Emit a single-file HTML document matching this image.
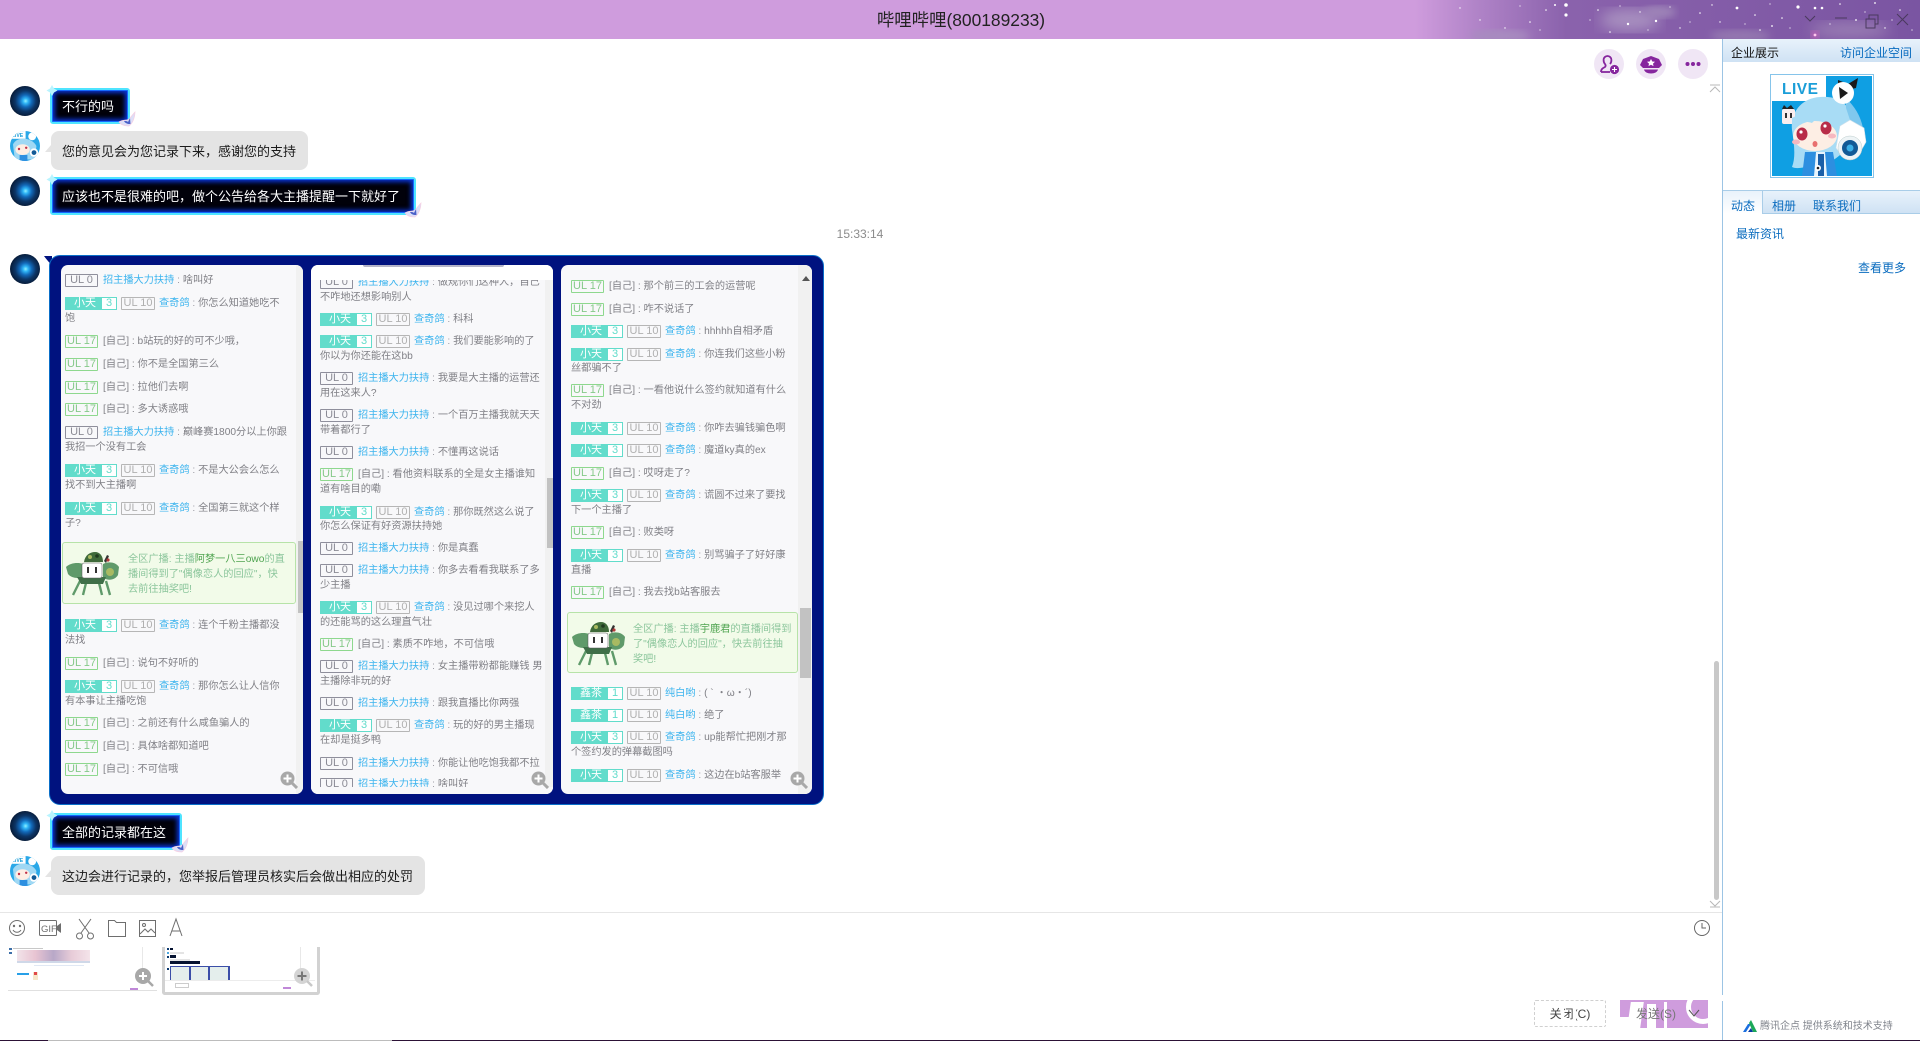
<!DOCTYPE html>
<html lang="zh">
<head>
<meta charset="utf-8">
<title>哔哩哔哩(800189233)</title>
<style>
html,body{margin:0;padding:0;background:#fff;width:1920px;height:1041px;overflow:hidden}
body{position:relative;font-family:"Liberation Sans","Noto Sans CJK SC",sans-serif;color:#222}
.a{position:absolute}
.t{position:absolute;white-space:nowrap;line-height:18px;height:18px;font-size:13px}
.lk{color:#0a6cbf;font-size:12px}
#title{left:0;top:0;width:1920px;height:39px;background:#cf9cdd;overflow:hidden}
.av{position:absolute;left:10px;width:30px;height:30px;border-radius:50%;overflow:hidden}
.av1{background:radial-gradient(circle at 52% 50%,#8ef0ff 0,#2fb4f6 12%,#1268b8 28%,#0c3566 48%,#071a36 72%,#040a18 100%)}
.bk{position:absolute;background:#01010a;border:2px solid #4fe4ff;border-radius:3px;box-sizing:border-box;box-shadow:inset 0 0 0 1px #1468ff,inset 0 0 5px 3px #0a36d8;color:#fff;font-size:13px;line-height:18px;white-space:nowrap}
.bk span{position:absolute;left:10px;top:50%;margin-top:-8px}
.gy{position:absolute;background:#e4e4e4;border-radius:8px;color:#1a1a1a;font-size:13px;line-height:18px;white-space:nowrap}
.gy span{position:absolute;left:11px;top:50%;margin-top:-8px}
.gy:before{content:"";position:absolute;left:-6px;top:14px;border-top:0 solid transparent;border-bottom:7px solid transparent;border-right:6px solid #e4e4e4;transform:scaleY(-1)}
#blue{left:49px;top:255px;width:775px;height:550px;box-sizing:border-box;background:#00127f;border:1px solid #0a6fc8;border-radius:11px}
.p{position:absolute;top:265px;height:529px;background:#f8f8fa;border-radius:7px;overflow:hidden;filter:blur(.3px)}
.sb{position:absolute;top:0;bottom:0;background:#f1f1f1}
.th{position:absolute;background:#c2c2c2}
.r{position:absolute;white-space:nowrap;height:16px;line-height:16px;font-size:10.2px;color:#808086;margin:1px 0 0}
.r u,.r s{display:inline-block;box-sizing:border-box;height:13px;line-height:11px;margin-top:1px;text-decoration:none;vertical-align:top;text-align:center;font-size:11px;margin-right:5px}
.r u{width:33px;border:1px solid #8f8f9c;border-radius:1px;color:#8b8b95}
.r u.g{border-color:#8ed88e;color:#86c98a}
.r u.x{width:34px;border-color:#b6b6b6;color:#b0b0b0;margin-right:4px}
.r s{width:52px;border:1px solid #62dccb;background:#62dccb;color:#fff;text-align:left;padding-left:8px;position:relative;margin-right:4px}
.r s em{position:absolute;right:0;top:0;width:14px;height:11px;background:#fff;color:#62dccb;font-style:normal;text-align:center}
.r b{font-weight:400;color:#3cb4ee}
.r i{font-style:normal;color:#9a9aa2}
.bn{position:absolute;box-sizing:border-box;background:#f2fbe9;border:1px solid #b7e3a8;border-radius:3px}
.bn p{position:absolute;left:65px;top:9px;margin:0;font-size:10.2px;line-height:15px;color:#8cc69c;white-space:nowrap}
.bn p b{font-weight:400;color:#4fa450}
.zm{position:absolute;width:18px;height:18px}
.ic{position:absolute;width:30px;height:30px;border-radius:50%;background:#f0e6f5;top:49px}
</style>
</head>
<body>

<div class="a" id="title">
<svg class="a" style="left:0;top:0" width="1920" height="39">
<defs>
<linearGradient id="fd" x1="0" x2="1" y1="0" y2="0">
<stop offset="0" stop-color="#cf9cdd"/><stop offset=".12" stop-color="#b184c8"/><stop offset=".3" stop-color="#8a62ac"/><stop offset="1" stop-color="#7a55a2"/>
</linearGradient>
<filter id="bl"><feGaussianBlur stdDeviation="7"/></filter>
<filter id="bl2"><feGaussianBlur stdDeviation="4"/></filter>
</defs>
<rect x="1415" y="0" width="505" height="39" fill="url(#fd)"/>
<ellipse cx="1630" cy="20" rx="30" ry="11" fill="#a890c0" filter="url(#bl)"/>
<ellipse cx="1660" cy="12" rx="16" ry="6" fill="#9e84b8" filter="url(#bl2)"/>
<ellipse cx="1850" cy="30" rx="40" ry="8" fill="#9a7eb4" filter="url(#bl)"/>
<ellipse cx="1500" cy="36" rx="30" ry="6" fill="#a88cc0" filter="url(#bl2)"/>
<ellipse cx="1740" cy="36" rx="30" ry="6" fill="#9478b0" filter="url(#bl2)"/>
<g fill="#fff">
<circle cx="1566" cy="15" r="1.600"/><circle cx="1566" cy="5" r="1.800"/><circle cx="1555" cy="5" r="1"/><circle cx="1546" cy="10" r=".8"/>
<circle cx="1656" cy="21" r="1.200"/><circle cx="1628" cy="24" r="1.200"/><circle cx="1598" cy="10" r=".8"/><circle cx="1610" cy="32" r=".8"/>
<circle cx="1737" cy="8" r="1.400"/><circle cx="1798" cy="7" r="1.600"/><circle cx="1815" cy="8" r="1.300"/><circle cx="1822" cy="8" r="1.300"/>
<circle cx="1755" cy="15" r=".8"/><circle cx="1700" cy="13" r=".8"/><circle cx="1782" cy="18" r=".8"/><circle cx="1760" cy="30" r=".8"/>
<circle cx="1856" cy="20" r=".9"/><circle cx="1875" cy="3" r=".9"/><circle cx="1900" cy="10" r=".8"/><circle cx="1480" cy="20" r=".7"/>
<circle cx="1460" cy="8" r=".7"/><circle cx="1505" cy="28" r=".7"/><circle cx="1530" cy="22" r=".8"/><circle cx="1680" cy="28" r=".7"/>
<circle cx="1720" cy="22" r=".7"/><circle cx="1840" cy="4" r=".8"/><circle cx="1885" cy="28" r=".7"/><circle cx="1772" cy="26" r=".9"/>
<circle cx="1590" cy="20" r=".6"/><circle cx="1620" cy="6" r=".6"/><circle cx="1640" cy="12" r=".7"/><circle cx="1648" cy="30" r=".6"/><circle cx="1670" cy="7" r=".6"/><circle cx="1690" cy="22" r=".6"/><circle cx="1712" cy="5" r=".7"/><circle cx="1745" cy="24" r=".6"/><circle cx="1770" cy="4" r=".6"/><circle cx="1790" cy="28" r=".6"/><circle cx="1830" cy="24" r=".6"/><circle cx="1865" cy="12" r=".6"/><circle cx="1892" cy="20" r=".6"/><circle cx="1912" cy="30" r=".6"/><circle cx="1520" cy="6" r=".6"/><circle cx="1540" cy="30" r=".6"/>
</g>
<circle cx="1815" cy="35" r="4" fill="#e060c0" filter="url(#bl2)"/><circle cx="1815" cy="35" r="1.400" fill="#ffc8ee"/>
<g fill="none" stroke="#4a3a5e" stroke-width="1">
<path d="M1805 16l5 5 5-5"/><path d="M1835 18h12"/><rect x="1866" y="19" width="9" height="9"/><path d="M1869 19v-4h9v9h-3"/><path d="M1897 14l11 11M1908 14l-11 11"/>
</g>
</svg>
<div class="t" style="left:875px;top:11px;font-size:17.400px;color:#222;width:172px;text-align:center">哔哩哔哩(800189233)</div>
</div>

<!-- action icons -->
<div class="ic" style="left:1594px">
<svg width="30" height="30" fill="none" stroke="#86269e" stroke-width="1.800"><path d="M7 23c0-3 2-4 4-5 1-1 .8-2 0-3-1-1-1.400-2-1.400-4 0-2.500 1.900-4 3.900-4s3.900 1.500 3.900 4c0 2-.4 3-1.400 4"/><path d="M7 23h9"/><circle cx="20.500" cy="20.500" r="4.600" fill="#86269e" stroke="none"/><path d="M20.500 18v5M18 20.500h5" stroke="#fff" stroke-width="1.100"/></svg>
</div>
<div class="ic" style="left:1636px">
<svg width="30" height="30"><path d="M15 7l8 3 3 6-3 3H7l-3-3 3-6z" fill="#86269e"/><path d="M15 10l1.300 2.500 2.700.3-2 1.800.5 2.500-2.500-1.300-2.500 1.300.5-2.500-2-1.800 2.700-.3z" fill="#fff"/><path d="M8 20.500h14c-.5 2.500-3.500 4-7 4s-6.500-1.500-7-4z" fill="#86269e"/></svg>
</div>
<div class="ic" style="left:1678px">
<svg width="30" height="30" fill="#86269e"><circle cx="9.500" cy="15" r="2"/><circle cx="15" cy="15" r="2"/><circle cx="20.500" cy="15" r="2"/></svg>
</div>

<!-- chat scrollbar -->
<svg class="a" style="left:1709px;top:84px" width="12" height="10" fill="none" stroke="#b8b8b8"><path d="M1 1h10M1 8l5-5 5 5"/></svg>
<div class="a" style="left:1714px;top:661px;width:5px;height:239px;background:#c8c8c8;border-radius:3px"></div>
<svg class="a" style="left:1709px;top:900px" width="12" height="9" fill="none" stroke="#b8b8b8"><path d="M1 7h10M1 1l5 5 5-5"/></svg>

<!-- avatar 1 -->
<div class="av av1" style="top:86px"></div>
<div class="bk" style="left:50px;top:88px;width:80px;height:36px"><span>不行的吗</span></div>

<div class="av" style="top:131px">
<svg width="30" height="30" viewBox="0 0 100 100"><rect width="100" height="100" fill="#2aa8e8"/><rect x="0" y="0" width="52" height="26" fill="#fff"/><text x="6" y="20" font-family="Liberation Sans" font-weight="700" font-size="17" fill="#1b9ed8">LIVE</text><circle cx="74" cy="18" r="13" fill="#fff"/><path d="M10 45C20 18 72 18 88 50L84 95H16z" fill="#9fd8f4"/><ellipse cx="42" cy="62" rx="24" ry="18" fill="#fdeee4"/><circle cx="30" cy="60" r="4" fill="#c03048"/><circle cx="54" cy="56" r="4" fill="#c03048"/><circle cx="80" cy="72" r="14" fill="#fff"/><circle cx="80" cy="72" r="8" fill="#125a96"/><rect x="32" y="80" width="26" height="20" fill="#2d8fe0"/></svg>
</div>
<div class="gy" style="left:51px;top:131px;width:257px;height:39px"><span>您的意见会为您记录下来，感谢您的支持</span></div>

<div class="av av1" style="top:176px"></div>
<div class="bk" style="left:50px;top:177px;width:366px;height:38px"><span>应该也不是很难的吧，做个公告给各大主播提醒一下就好了</span></div>

<div class="t" style="left:820px;top:225px;width:80px;text-align:center;font-size:12px;color:#8c8c8c">15:33:14</div>

<div class="av av1" style="top:254px"></div>
<svg class="a" style="left:44px;top:256px" width="8" height="10"><path d="M0 0h8v10C5 6 2 3 0 0z" fill="#00127f"/></svg>
<div class="a" id="blue"></div>

<!-- Panel 1 -->
<div class="p" style="left:61px;width:242px">
<div class="sb" style="left:235px;width:7px"></div>
<div class="th" style="left:237px;top:276px;width:5px;height:72px"></div>
<p class="r" style="left:4px;top:7px"><u>UL 0</u><b>招主播大力扶持 <i>:</i></b> 啥叫好</p>
<p class="r" style="left:4px;top:30px"><s>小天<em>3</em></s><u class="x">UL 10</u><b>查奇鸽 <i>:</i></b> 你怎么知道她吃不</p>
<p class="r" style="left:4px;top:45px">饱</p>
<p class="r" style="left:4px;top:68px"><u class="g">UL 17</u>[自己] : b站玩的好的可不少哦，</p>
<p class="r" style="left:4px;top:91px"><u class="g">UL 17</u>[自己] : 你不是全国第三么</p>
<p class="r" style="left:4px;top:114px"><u class="g">UL 17</u>[自己] : 拉他们去啊</p>
<p class="r" style="left:4px;top:136px"><u class="g">UL 17</u>[自己] : 多大诱惑哦</p>
<p class="r" style="left:4px;top:159px"><u>UL 0</u><b>招主播大力扶持 <i>:</i></b> 巅峰赛1800分以上你跟</p>
<p class="r" style="left:4px;top:174px">我招一个没有工会</p>
<p class="r" style="left:4px;top:197px"><s>小天<em>3</em></s><u class="x">UL 10</u><b>查奇鸽 <i>:</i></b> 不是大公会么怎么</p>
<p class="r" style="left:4px;top:212px">找不到大主播啊</p>
<p class="r" style="left:4px;top:235px"><s>小天<em>3</em></s><u class="x">UL 10</u><b>查奇鸽 <i>:</i></b> 全国第三就这个样</p>
<p class="r" style="left:4px;top:250px">子?</p>
<div class="bn" style="left:1px;top:277px;width:234px;height:62px">
<svg class="a" style="left:3px;top:9px" width="54" height="45" viewBox="0 0 54 45"><g fill="none" stroke="#5f9a6a" stroke-width="2.400"><path d="M14 29L7 43M20 31l-3 12M33 31l3 12M40 29l4 14"/></g><path d="M0 15c4-4 12-5 17-3v13c-5 2-12 1-15-3z" fill="#5f9a6a"/><path d="M53 15c-3-5-11-6-16-3v14c6 3 12 2 15-3z" fill="#5f9a6a"/><circle cx="44" cy="20" r="4" fill="#c8c860" opacity=".7"/><path d="M11 25h29l-3 7H15z" fill="#3f6f48"/><path d="M18 10c1-7 6-10 11-10s8 4 8 10z" fill="#3f6a3a"/><circle cx="24" cy="5" r="2" fill="#a8b860"/><circle cx="31" cy="4" r="1.800" fill="#1f3a1f"/><path d="M38 9l3-6 2 1-3 7z" fill="#333"/><circle cx="42" cy="8" r="1.600" fill="#b03838"/><rect x="16" y="11" width="20" height="15" rx="2" fill="#fff" stroke="#555" stroke-width=".5"/><rect x="21" y="15" width="2" height="6" fill="#333"/><rect x="29" y="15" width="2" height="6" fill="#333"/></svg>
<p>全区广播: 主播<b>阿梦一八三owo</b>的直<br>播间得到了"偶像恋人的回应"，快<br>去前往抽奖吧!</p>
</div>
<p class="r" style="left:4px;top:352px"><s>小天<em>3</em></s><u class="x">UL 10</u><b>查奇鸽 <i>:</i></b> 连个千粉主播都没</p>
<p class="r" style="left:4px;top:367px">法找</p>
<p class="r" style="left:4px;top:390px"><u class="g">UL 17</u>[自己] : 说句不好听的</p>
<p class="r" style="left:4px;top:413px"><s>小天<em>3</em></s><u class="x">UL 10</u><b>查奇鸽 <i>:</i></b> 那你怎么让人信你</p>
<p class="r" style="left:4px;top:428px">有本事让主播吃饱</p>
<p class="r" style="left:4px;top:450px"><u class="g">UL 17</u>[自己] : 之前还有什么咸鱼骗人的</p>
<p class="r" style="left:4px;top:473px"><u class="g">UL 17</u>[自己] : 具体啥都知道吧</p>
<p class="r" style="left:4px;top:496px"><u class="g">UL 17</u>[自己] : 不可信哦</p>
<svg class="zm" style="left:219px;top:506px"><circle cx="7.500" cy="7.500" r="7" fill="#a8a8a8"/><path d="M7.500 3.500v8M3.500 7.500h8" stroke="#fff" stroke-width="2"/><path d="M12 12l5 5" stroke="#a8a8a8" stroke-width="3"/></svg>
</div>

<!-- Panel 2 -->
<div class="p" style="left:311px;width:242px">
<div class="sb" style="left:234px;width:8px"></div>
<div class="th" style="left:236px;top:213px;width:6px;height:70px"></div>
<p class="r" style="left:9px;top:9px"><u>UL 0</u><b>招主播大力扶持 <i>:</i></b> 做规你们这种人，自己</p>
<p class="r" style="left:9px;top:24px">不咋地还想影响别人</p>
<p class="r" style="left:9px;top:46px"><s>小天<em>3</em></s><u class="x">UL 10</u><b>查奇鸽 <i>:</i></b> 科科</p>
<p class="r" style="left:9px;top:68px"><s>小天<em>3</em></s><u class="x">UL 10</u><b>查奇鸽 <i>:</i></b> 我们要能影响的了</p>
<p class="r" style="left:9px;top:83px">你以为你还能在这bb</p>
<p class="r" style="left:9px;top:105px"><u>UL 0</u><b>招主播大力扶持 <i>:</i></b> 我要是大主播的运营还</p>
<p class="r" style="left:9px;top:120px">用在这来人?</p>
<p class="r" style="left:9px;top:142px"><u>UL 0</u><b>招主播大力扶持 <i>:</i></b> 一个百万主播我就天天</p>
<p class="r" style="left:9px;top:157px">带着都行了</p>
<p class="r" style="left:9px;top:179px"><u>UL 0</u><b>招主播大力扶持 <i>:</i></b> 不懂再这说话</p>
<p class="r" style="left:9px;top:201px"><u class="g">UL 17</u>[自己] : 看他资料联系的全是女主播谁知</p>
<p class="r" style="left:9px;top:216px">道有啥目的嘞</p>
<p class="r" style="left:9px;top:239px"><s>小天<em>3</em></s><u class="x">UL 10</u><b>查奇鸽 <i>:</i></b> 那你既然这么说了</p>
<p class="r" style="left:9px;top:253px">你怎么保证有好资源扶持她</p>
<p class="r" style="left:9px;top:275px"><u>UL 0</u><b>招主播大力扶持 <i>:</i></b> 你是真蠢</p>
<p class="r" style="left:9px;top:297px"><u>UL 0</u><b>招主播大力扶持 <i>:</i></b> 你多去看看我联系了多</p>
<p class="r" style="left:9px;top:312px">少主播</p>
<p class="r" style="left:9px;top:334px"><s>小天<em>3</em></s><u class="x">UL 10</u><b>查奇鸽 <i>:</i></b> 没见过哪个来挖人</p>
<p class="r" style="left:9px;top:349px">的还能骂的这么理直气壮</p>
<p class="r" style="left:9px;top:371px"><u class="g">UL 17</u>[自己] : 素质不咋地，不可信哦</p>
<p class="r" style="left:9px;top:393px"><u>UL 0</u><b>招主播大力扶持 <i>:</i></b> 女主播带粉都能赚钱 男</p>
<p class="r" style="left:9px;top:408px">主播除非玩的好</p>
<p class="r" style="left:9px;top:430px"><u>UL 0</u><b>招主播大力扶持 <i>:</i></b> 跟我直播比你两强</p>
<p class="r" style="left:9px;top:452px"><s>小天<em>3</em></s><u class="x">UL 10</u><b>查奇鸽 <i>:</i></b> 玩的好的男主播现</p>
<p class="r" style="left:9px;top:467px">在却是挺多鸭</p>
<p class="r" style="left:9px;top:490px"><u>UL 0</u><b>招主播大力扶持 <i>:</i></b> 你能让他吃饱我都不拉</p>
<p class="r" style="left:9px;top:511px"><u>UL 0</u><b>招主播大力扶持 <i>:</i></b> 啥叫好</p>
<div class="a" style="left:0;top:0;width:242px;height:15px;background:#fff"></div>
<div class="a" style="left:52px;top:0;width:141px;height:2px;background:#b4b4c8;border-radius:0 0 6px 6px"></div>
<div class="a" style="left:0;top:522px;width:242px;height:7px;background:#f8f8fa"></div>
<svg class="zm" style="left:220px;top:506px"><circle cx="7.500" cy="7.500" r="7" fill="#a8a8a8"/><path d="M7.500 3.500v8M3.500 7.500h8" stroke="#fff" stroke-width="2"/><path d="M12 12l5 5" stroke="#a8a8a8" stroke-width="3"/></svg>
</div>

<!-- Panel 3 -->
<div class="p" style="left:561px;width:251px">
<div class="sb" style="left:237px;width:14px"></div>
<div class="th" style="left:239px;top:343px;width:11px;height:70px"></div>
<svg class="a" style="left:241px;top:11px" width="8" height="5"><path d="M0 5l4-5 4 5z" fill="#555"/></svg>
<p class="r" style="left:10px;top:13px"><u class="g">UL 17</u>[自己] : 那个前三的工会的运营呢</p>
<p class="r" style="left:10px;top:36px"><u class="g">UL 17</u>[自己] : 咋不说话了</p>
<p class="r" style="left:10px;top:58px"><s>小天<em>3</em></s><u class="x">UL 10</u><b>查奇鸽 <i>:</i></b> hhhhh自相矛盾</p>
<p class="r" style="left:10px;top:81px"><s>小天<em>3</em></s><u class="x">UL 10</u><b>查奇鸽 <i>:</i></b> 你连我们这些小粉</p>
<p class="r" style="left:10px;top:95px">丝都骗不了</p>
<p class="r" style="left:10px;top:117px"><u class="g">UL 17</u>[自己] : 一看他说什么签约就知道有什么</p>
<p class="r" style="left:10px;top:132px">不对劲</p>
<p class="r" style="left:10px;top:155px"><s>小天<em>3</em></s><u class="x">UL 10</u><b>查奇鸽 <i>:</i></b> 你咋去骗钱骗色啊</p>
<p class="r" style="left:10px;top:177px"><s>小天<em>3</em></s><u class="x">UL 10</u><b>查奇鸽 <i>:</i></b> 魔道ky真的ex</p>
<p class="r" style="left:10px;top:200px"><u class="g">UL 17</u>[自己] : 哎呀走了?</p>
<p class="r" style="left:10px;top:222px"><s>小天<em>3</em></s><u class="x">UL 10</u><b>查奇鸽 <i>:</i></b> 谎圆不过来了要找</p>
<p class="r" style="left:10px;top:237px">下一个主播了</p>
<p class="r" style="left:10px;top:259px"><u class="g">UL 17</u>[自己] : 败类呀</p>
<p class="r" style="left:10px;top:282px"><s>小天<em>3</em></s><u class="x">UL 10</u><b>查奇鸽 <i>:</i></b> 别骂骗子了好好康</p>
<p class="r" style="left:10px;top:297px">直播</p>
<p class="r" style="left:10px;top:319px"><u class="g">UL 17</u>[自己] : 我去找b站客服去</p>
<div class="bn" style="left:6px;top:347px;width:231px;height:61px">
<svg class="a" style="left:4px;top:9px" width="54" height="45" viewBox="0 0 54 45"><g fill="none" stroke="#5f9a6a" stroke-width="2.400"><path d="M14 29L7 43M20 31l-3 12M33 31l3 12M40 29l4 14"/></g><path d="M0 15c4-4 12-5 17-3v13c-5 2-12 1-15-3z" fill="#5f9a6a"/><path d="M53 15c-3-5-11-6-16-3v14c6 3 12 2 15-3z" fill="#5f9a6a"/><circle cx="44" cy="20" r="4" fill="#c8c860" opacity=".7"/><path d="M11 25h29l-3 7H15z" fill="#3f6f48"/><path d="M18 10c1-7 6-10 11-10s8 4 8 10z" fill="#3f6a3a"/><circle cx="24" cy="5" r="2" fill="#a8b860"/><circle cx="31" cy="4" r="1.800" fill="#1f3a1f"/><path d="M38 9l3-6 2 1-3 7z" fill="#333"/><circle cx="42" cy="8" r="1.600" fill="#b03838"/><rect x="16" y="11" width="20" height="15" rx="2" fill="#fff" stroke="#555" stroke-width=".5"/><rect x="21" y="15" width="2" height="6" fill="#333"/><rect x="29" y="15" width="2" height="6" fill="#333"/></svg>
<p>全区广播: 主播<b>宇鹿君</b>的直播间得到<br>了"偶像恋人的回应"，快去前往抽<br>奖吧!</p>
</div>
<p class="r" style="left:10px;top:420px"><s>鑫茶<em>1</em></s><u class="x">UL 10</u><b>纯白哟 <i>:</i></b> ( ` ・ω・´)</p>
<p class="r" style="left:10px;top:442px"><s>鑫茶<em>1</em></s><u class="x">UL 10</u><b>纯白哟 <i>:</i></b> 绝了</p>
<p class="r" style="left:10px;top:464px"><s>小天<em>3</em></s><u class="x">UL 10</u><b>查奇鸽 <i>:</i></b> up能帮忙把刚才那</p>
<p class="r" style="left:10px;top:479px">个签约发的弹幕截图吗</p>
<p class="r" style="left:10px;top:502px"><s>小天<em>3</em></s><u class="x">UL 10</u><b>查奇鸽 <i>:</i></b> 这边在b站客服举</p>
<svg class="zm" style="left:229px;top:506px"><circle cx="7.500" cy="7.500" r="7" fill="#a8a8a8"/><path d="M7.500 3.500v8M3.500 7.500h8" stroke="#fff" stroke-width="2"/><path d="M12 12l5 5" stroke="#a8a8a8" stroke-width="3"/></svg>
</div>

<!-- last messages -->
<div class="av av1" style="top:811px"></div>
<div class="bk" style="left:50px;top:813px;width:132px;height:37px"><span>全部的记录都在这</span></div>

<div class="av" style="top:856px">
<svg width="30" height="30" viewBox="0 0 100 100"><rect width="100" height="100" fill="#2aa8e8"/><rect x="0" y="0" width="52" height="26" fill="#fff"/><text x="6" y="20" font-family="Liberation Sans" font-weight="700" font-size="17" fill="#1b9ed8">LIVE</text><circle cx="74" cy="18" r="13" fill="#fff"/><path d="M10 45C20 18 72 18 88 50L84 95H16z" fill="#9fd8f4"/><ellipse cx="42" cy="62" rx="24" ry="18" fill="#fdeee4"/><circle cx="30" cy="60" r="4" fill="#c03048"/><circle cx="54" cy="56" r="4" fill="#c03048"/><circle cx="80" cy="72" r="14" fill="#fff"/><circle cx="80" cy="72" r="8" fill="#125a96"/><rect x="32" y="80" width="26" height="20" fill="#2d8fe0"/></svg>
</div>
<div class="gy" style="left:51px;top:856px;width:374px;height:39px"><span>这边会进行记录的，您举报后管理员核实后会做出相应的处罚</span></div>

<!-- bubble decorations -->
<svg class="a" style="left:0;top:0;pointer-events:none" width="500" height="870">
<g transform="translate(119 112)">
<path d="M0 10C4 7 8 9 10 7 12 5 14 2 16 0 16 5 14 11 10 14 6 14 2 13 0 10z" fill="#dcdff8" stroke="#f6cfe2" stroke-width=".7"/><path d="M5 9c2 0 3 0 4 1l2-4 .5 6c-2 0-5 0-6.500-3z" fill="#4a60c8"/>
</g>
<g transform="translate(405 203)">
<path d="M0 10C4 7 8 9 10 7 12 5 14 2 16 0 16 5 14 11 10 14 6 14 2 13 0 10z" fill="#dcdff8" stroke="#f6cfe2" stroke-width=".7"/><path d="M5 9c2 0 3 0 4 1l2-4 .5 6c-2 0-5 0-6.500-3z" fill="#4a60c8"/>
</g>
<g transform="translate(172 838)">
<path d="M0 10C4 7 8 9 10 7 12 5 14 2 16 0 16 5 14 11 10 14 6 14 2 13 0 10z" fill="#dcdff8" stroke="#f6cfe2" stroke-width=".7"/><path d="M5 9c2 0 3 0 4 1l2-4 .5 6c-2 0-5 0-6.500-3z" fill="#4a60c8"/>
</g>
<g fill="#b8f4ff">
<path d="M52 85l2 3.500 3.500 2-3.500 2-2 3.500-2-3.500-3.500-2 3.500-2z"/>
<path d="M52 174l2 3.500 3.500 2-3.500 2-2 3.500-2-3.500-3.500-2 3.500-2z"/>
<path d="M52 810l2 3.500 3.500 2-3.500 2-2 3.500-2-3.500-3.500-2 3.500-2z"/>
</g>
</svg>

<!-- input area -->
<div class="a" style="left:0;top:912px;width:1722px;height:1px;background:#e6e6e6"></div>
<svg class="a" style="left:0;top:916px" width="200" height="24" fill="none" stroke="#6e6e6e" stroke-width="1">
<circle cx="17" cy="12" r="7.500"/><circle cx="14" cy="10" r=".7" fill="#6e6e6e"/><circle cx="20" cy="10" r=".7" fill="#6e6e6e"/><path d="M13 14c2 3 6 3 8 0"/>
<rect x="39.500" y="4.500" width="17" height="15" rx="1"/><text x="41" y="16" font-size="9.500" font-family="Liberation Sans" fill="#6e6e6e" stroke="none">GIF</text><path d="M57 10l4-3v10l-4-3z" fill="#6e6e6e" stroke="none"/>
<path d="M79 3l10 14M91 3L81 17"/><circle cx="79.500" cy="20" r="3"/><circle cx="90.500" cy="20" r="3"/>
<path d="M108.500 4.500h6l2 2h9v14h-17z"/>
<rect x="139.500" y="4.500" width="16" height="16"/><circle cx="144" cy="9" r="1.500"/><path d="M140 18l5-5 3 3 3-3 4 4"/>
<path d="M170 20L176 3l6 17M172 15h8"/>
</svg>
<svg class="a" style="left:1693px;top:919px" width="18" height="18" fill="none" stroke="#666"><circle cx="9" cy="9" r="7.500"/><path d="M9 4v5h4"/></svg>

<!-- thumbnails -->
<div class="a" style="left:8px;top:947px;width:149px;height:44px;overflow:hidden;background:#fff">
<div class="a" style="left:1px;top:1px;width:3px;height:2px;background:#3c6fa8"></div>
<div class="a" style="left:5px;top:1px;width:30px;height:1px;background:#c8c8c8"></div>
<div class="a" style="left:1px;top:5px;width:3px;height:2px;background:#3c6fa8"></div>
<div class="a" style="left:9px;top:3px;width:73px;height:11px;background:linear-gradient(90deg,#f2e4ea,#e8c4d2,#b8a8c8,#e8ccd8,#f4e4ea)"></div>
<div class="a" style="left:9px;top:14px;width:73px;height:2px;background:#cfd8e8"></div>
<div class="a" style="left:9px;top:26px;width:12px;height:2px;background:#28a0e8"></div>
<div class="a" style="left:25px;top:25px;width:5px;height:8px;background:#f6e6c8"></div>
<div class="a" style="left:26px;top:25px;width:3px;height:3px;background:#e04848"></div>
<div class="a" style="left:26px;top:18px;width:50px;height:1px;background:#e0e8f4"></div>
<div class="a" style="left:0;top:43px;width:149px;height:1px;background:#e0e0e0"></div>
<div class="a" style="left:122px;top:41px;width:8px;height:2px;background:#c088d8"></div>
<div class="a" style="left:134px;top:0;width:1px;height:30px;background:#e8e8e8"></div>
<svg class="a" style="left:127px;top:21px" width="20" height="20"><circle cx="8" cy="8" r="8" fill="#a8a8a8"/><path d="M8 4v8M4 8h8" stroke="#fff" stroke-width="2"/><path d="M13 13l5 5" stroke="#a8a8a8" stroke-width="2.500"/></svg>
</div>
<div class="a" style="left:162px;top:947px;width:158px;height:48px;box-sizing:border-box;border:3px solid #d2d2d2;border-top:0;border-radius:0 0 3px 3px;overflow:hidden;background:#fff">
<div class="a" style="left:2px;top:1px;width:2px;height:2px;background:#0c3a70"></div>
<div class="a" style="left:5px;top:1px;width:3px;height:2px;background:#051230"></div>
<div class="a" style="left:2px;top:5px;width:2px;height:2px;background:#4ca8e0"></div>
<div class="a" style="left:5px;top:5px;width:14px;height:2px;background:#e4e4e4"></div>
<div class="a" style="left:2px;top:9px;width:2px;height:2px;background:#0c3a70"></div>
<div class="a" style="left:5px;top:8px;width:6px;height:3px;background:#051230"></div>
<div class="a" style="left:5px;top:12px;width:20px;height:2px;background:#e4e4e4"></div>
<div class="a" style="left:5px;top:14px;width:30px;height:3px;background:#051230"></div>
<div class="a" style="left:2px;top:21px;width:2px;height:2px;background:#0c3a70"></div>
<div class="a" style="left:5px;top:19px;width:60px;height:14px;background:#3b4ea8"></div>
<div class="a" style="left:6px;top:20px;width:18px;height:13px;background:#e4eeec"></div>
<div class="a" style="left:26px;top:20px;width:17px;height:13px;background:#e4eeec"></div>
<div class="a" style="left:45px;top:20px;width:18px;height:13px;background:#e4eeec"></div>
<div class="a" style="left:0;top:33px;width:150px;height:1px;background:#ececec"></div>
<div class="a" style="left:10px;top:36px;width:14px;height:5px;border:1px solid #ccc;box-sizing:border-box"></div>
<div class="a" style="left:118px;top:40px;width:8px;height:2px;background:#c088d8"></div>
<div class="a" style="left:135px;top:0;width:1px;height:30px;background:#e8e8e8"></div>
<svg class="a" style="left:129px;top:21px" width="20" height="22"><circle cx="8" cy="8" r="8" fill="#d4d4d4"/><path d="M8 3.500v9M3.500 8h9" stroke="#777" stroke-width="2"/><path d="M13 13l5 5" stroke="#c8c8c8" stroke-width="2.500"/></svg>
</div>

<!-- buttons -->
<div class="a" style="left:1534px;top:1000px;width:72px;height:27px;box-sizing:border-box;border:1px dashed #d0d0d0;border-radius:2px"></div>
<div class="t" style="left:1534px;top:1005px;width:72px;text-align:center;font-size:12px;color:#444">关闭(C)</div>
<div class="a" style="left:1562px;top:1006px;width:2px;height:14px;background:#fff"></div>
<div class="a" style="left:1574px;top:1006px;width:2px;height:14px;background:#fff"></div>
<div class="a" style="left:1620px;top:1000px;width:88px;height:28px;background:#cf9cdd;overflow:hidden">
<div class="a" style="left:9px;top:2px;width:13px;height:26px;background:#fff;transform:skewX(-8deg)"></div>
<div class="a" style="left:27px;top:4px;width:9px;height:24px;background:#fff"></div>
<div class="a" style="left:0;top:17px;width:10px;height:11px;background:#fff"></div>
<div class="a" style="left:44px;top:2px;width:3px;height:26px;background:#fff"></div>
<div class="a" style="left:66px;top:-10px;width:34px;height:34px;border:5px solid #fff;border-radius:50%;box-sizing:border-box"></div>
</div>
<div class="t" style="left:1620px;top:1005px;width:72px;text-align:center;font-size:12px;color:#777">发送(S)</div>
<svg class="a" style="left:1688px;top:1009px" width="12" height="9" fill="none" stroke="#555"><path d="M1 1l5 6 5-6"/></svg>

<!-- right panel -->
<div class="a" style="left:1722px;top:39px;width:1px;height:956px;background:#9cc4e4"></div>
<div class="a" style="left:1722px;top:1001px;width:1px;height:40px;background:#9cc4e4"></div>
<div class="a" style="left:1723px;top:39px;width:197px;height:23px;background:linear-gradient(#e8f2fb,#cfe2f4)"></div>
<div class="t" style="left:1731px;top:44px;font-size:12px;color:#111">企业展示</div>
<div class="t lk" style="left:1840px;top:44px">访问企业空间</div>

<svg class="a" style="left:1770px;top:74px" width="104" height="104" viewBox="-2 -2 104 104">
<rect x="-1.500" y="-1.500" width="103" height="103" fill="#fff" stroke="#86c4ea"/>
<rect x="0" y="25" width="100" height="75" fill="#0f9fe3"/>
<rect x="54" y="0" width="46" height="30" fill="#0f9fe3"/>
<rect x="7" y="4" width="46" height="17" rx="3" fill="#fff"/>
<text x="10" y="18" font-family="Liberation Sans" font-weight="700" font-size="15.500" fill="#1b9ed8" textLength="36">LIVE</text>
<path d="M20 54C18 36 30 22 48 21c16-1 24 4 30 14 6 12 10 22 6 30-10 8-20 20-30 22-12 0-26 8-34 4 4-10 2-24 0-37z" fill="#a8dcf5"/>
<path d="M74 22c10 10 16 20 18 36l-8 4-10-30z" fill="#7fc8ee"/>
<path d="M66 4l10 4 10-6-2 10-9 2-9-2z" fill="#1a1a1a"/>
<circle cx="71" cy="17" r="11" fill="#fff"/><path d="M67 11l9 6-8 6z" fill="#1a1a1a"/>
<rect x="10" y="33" width="13" height="15" rx="2" fill="#fbeeee"/><rect x="13" y="37" width="2" height="5" fill="#333"/><rect x="18" y="37" width="2" height="5" fill="#333"/><path d="M10 33l2-4 3 3 4-3 3 4z" fill="#222"/>
<ellipse cx="43" cy="60" rx="22" ry="15" fill="#fdeee4"/>
<path d="M20 42c10-6 34-8 44 4l-6 2c-6-6-14-6-18-1-6-2-12-1-20 4z" fill="#a8dcf5"/>
<ellipse cx="30" cy="58" rx="5.500" ry="6.500" fill="#b82c48"/><circle cx="29" cy="56" r="1.600" fill="#fff"/>
<ellipse cx="54" cy="52" rx="5.500" ry="6.500" fill="#b82c48"/><circle cx="53" cy="50" r="1.600" fill="#fff"/>
<ellipse cx="24" cy="66" rx="4" ry="2.500" fill="#f6b8c0"/><ellipse cx="60" cy="60" rx="4" ry="2.500" fill="#f6b8c0"/>
<ellipse cx="43" cy="68" rx="2.500" ry="3" fill="#e87070"/>
<path d="M33 76h28l4 24H30z" fill="#2d8fe0"/><path d="M44 76l9 0 2 24H42z" fill="#e8f4fc"/>
<rect x="46" y="78" width="6" height="22" fill="#1a5fa8"/><circle cx="46" cy="92" r="3" fill="#fff"/><circle cx="46" cy="92" r="1.300" fill="#222"/>
<path d="M68 50l10-6 14 8 2 14-8 14-14 2-8-10z" fill="#fff" stroke="#d0e0ea" stroke-width=".6"/>
<circle cx="78" cy="72" r="12" fill="#eef4f6" stroke="#bcc" stroke-width=".5"/><circle cx="78" cy="72" r="8" fill="#125a96"/><circle cx="78" cy="72" r="3.500" fill="#3bb0e8"/>
</svg>

<div class="a" style="left:1723px;top:190px;width:197px;height:1px;background:#a9cde8"></div>
<div class="a" style="left:1723px;top:191px;width:197px;height:23px;background:linear-gradient(#e8f2fb,#cfe2f4);border-bottom:1px solid #a9cde8;box-sizing:border-box"></div>
<div class="a" style="left:1723px;top:191px;width:40px;height:23px;background:linear-gradient(#e8f2fb,#fff);border-right:1px solid #a9cde8;box-sizing:border-box"></div>
<div class="t lk" style="left:1731px;top:197px">动态</div>
<div class="t lk" style="left:1772px;top:197px">相册</div>
<div class="t lk" style="left:1813px;top:197px">联系我们</div>
<div class="t lk" style="left:1736px;top:225px">最新资讯</div>
<div class="t lk" style="left:1858px;top:259px">查看更多</div>

<svg class="a" style="left:1743px;top:1020px" width="14" height="13"><path d="M0 12L5 4h3L3 12z" fill="#1a6fe0"/><path d="M6 3l2-3 6 12h-4z" fill="#1ca858"/><path d="M5 12l3-4 2 4z" fill="#0a3aa0"/></svg>
<div class="t" style="left:1760px;top:1018px;font-size:10px;color:#80848c">腾讯企点 提供系统和技术支持</div>

<!-- bottom edge -->
<div class="a" style="left:0;top:1040px;width:1920px;height:1px;background:#2c1236"></div>
<div class="a" style="left:48px;top:1040px;width:344px;height:1px;background:#bcbcbc"></div>

</body>
</html>
